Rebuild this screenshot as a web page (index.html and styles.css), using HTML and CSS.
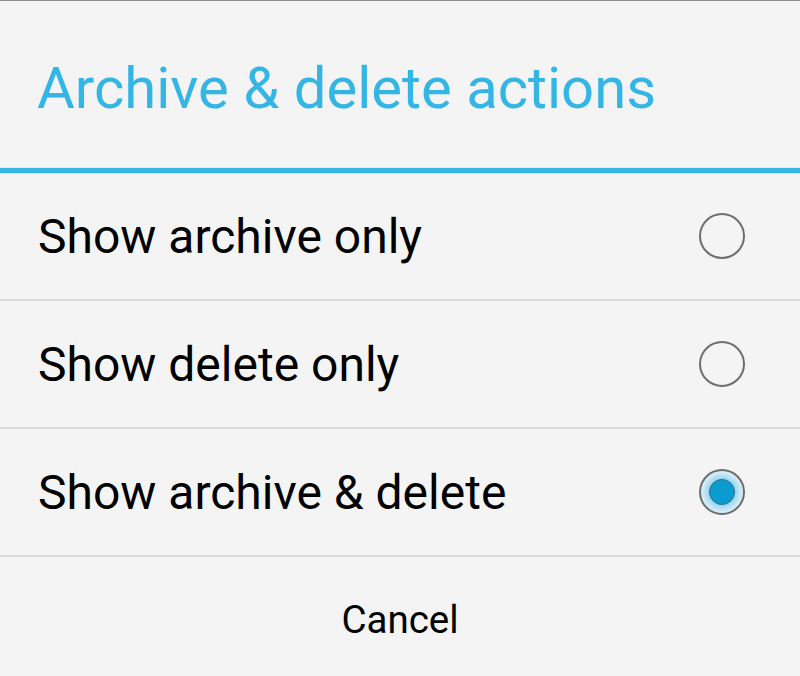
FILE: index.html
```html
<!DOCTYPE html>
<html>
<head>
<meta charset="utf-8">
<link rel="stylesheet" href="styles.css">
</head>
<body>
<div class="dialog">
  <div class="topline"></div>
  <div class="title">Archive &amp; delete actions</div>
  <div class="title-divider"></div>
  <div class="list">
    <div class="row">
      <span class="label">Show archive only</span>
      <span class="radio"></span>
    </div>
    <div class="row">
      <span class="label">Show delete only</span>
      <span class="radio"></span>
    </div>
    <div class="row">
      <span class="label">Show archive &amp; delete</span>
      <span class="radio checked"><span class="dot"></span></span>
    </div>
  </div>
  <div class="footer">
    <span class="cancel">Cancel</span>
  </div>
</div>
</body>
</html>
```
FILE: styles.css
```css
html, body {
  margin: 0;
  padding: 0;
  background: #f4f4f4;
}
.dialog {
  width: 800px;
  height: 676px;
  display: flex;
  flex-direction: column;
  font-family: Roboto, "Liberation Sans", sans-serif;
  background: #f4f4f4;
  overflow: hidden;
}
.topline {
  height: 1px;
  background: #8e8e8e;
}
.title {
  height: 167px;
  display: flex;
  align-items: center;
  padding-left: 37px;
  padding-top: 6px;
  box-sizing: border-box;
  font-size: 58px;
  color: #33b5e5;
}
.title-divider {
  height: 5px;
  background: #33b5e5;
  box-shadow: 0 0 0 0.5px #bfe6f6;
}
.row {
  height: 126px;
  border-bottom: 2px solid #dadada;
  display: flex;
  align-items: center;
  justify-content: space-between;
  padding-left: 38px;
  padding-right: 55px;
}
.label {
  font-size: 48px;
  color: #000;
}
.radio {
  width: 42px;
  height: 42px;
  border: 2.5px solid #6e6e6e;
  border-radius: 50%;
  display: flex;
  align-items: center;
  justify-content: center;
  background: transparent;
}
.radio.checked {
  background: radial-gradient(circle, #9fd6ee 0%, #b9e2f4 55%, #e3f3fa 75%, #fbfdfe 100%);
}
.dot {
  width: 24px;
  height: 24px;
  border-radius: 50%;
  background: #0a9bd0;
  border: 1.5px solid #2f6f88;
  box-shadow: 0 0 3px 1px rgba(120, 200, 235, 0.7);
}
.footer {
  flex: 1;
  display: flex;
  align-items: center;
  justify-content: center;
  padding-top: 6px;
}
.cancel {
  font-size: 38.5px;
  color: #000;
}
```
